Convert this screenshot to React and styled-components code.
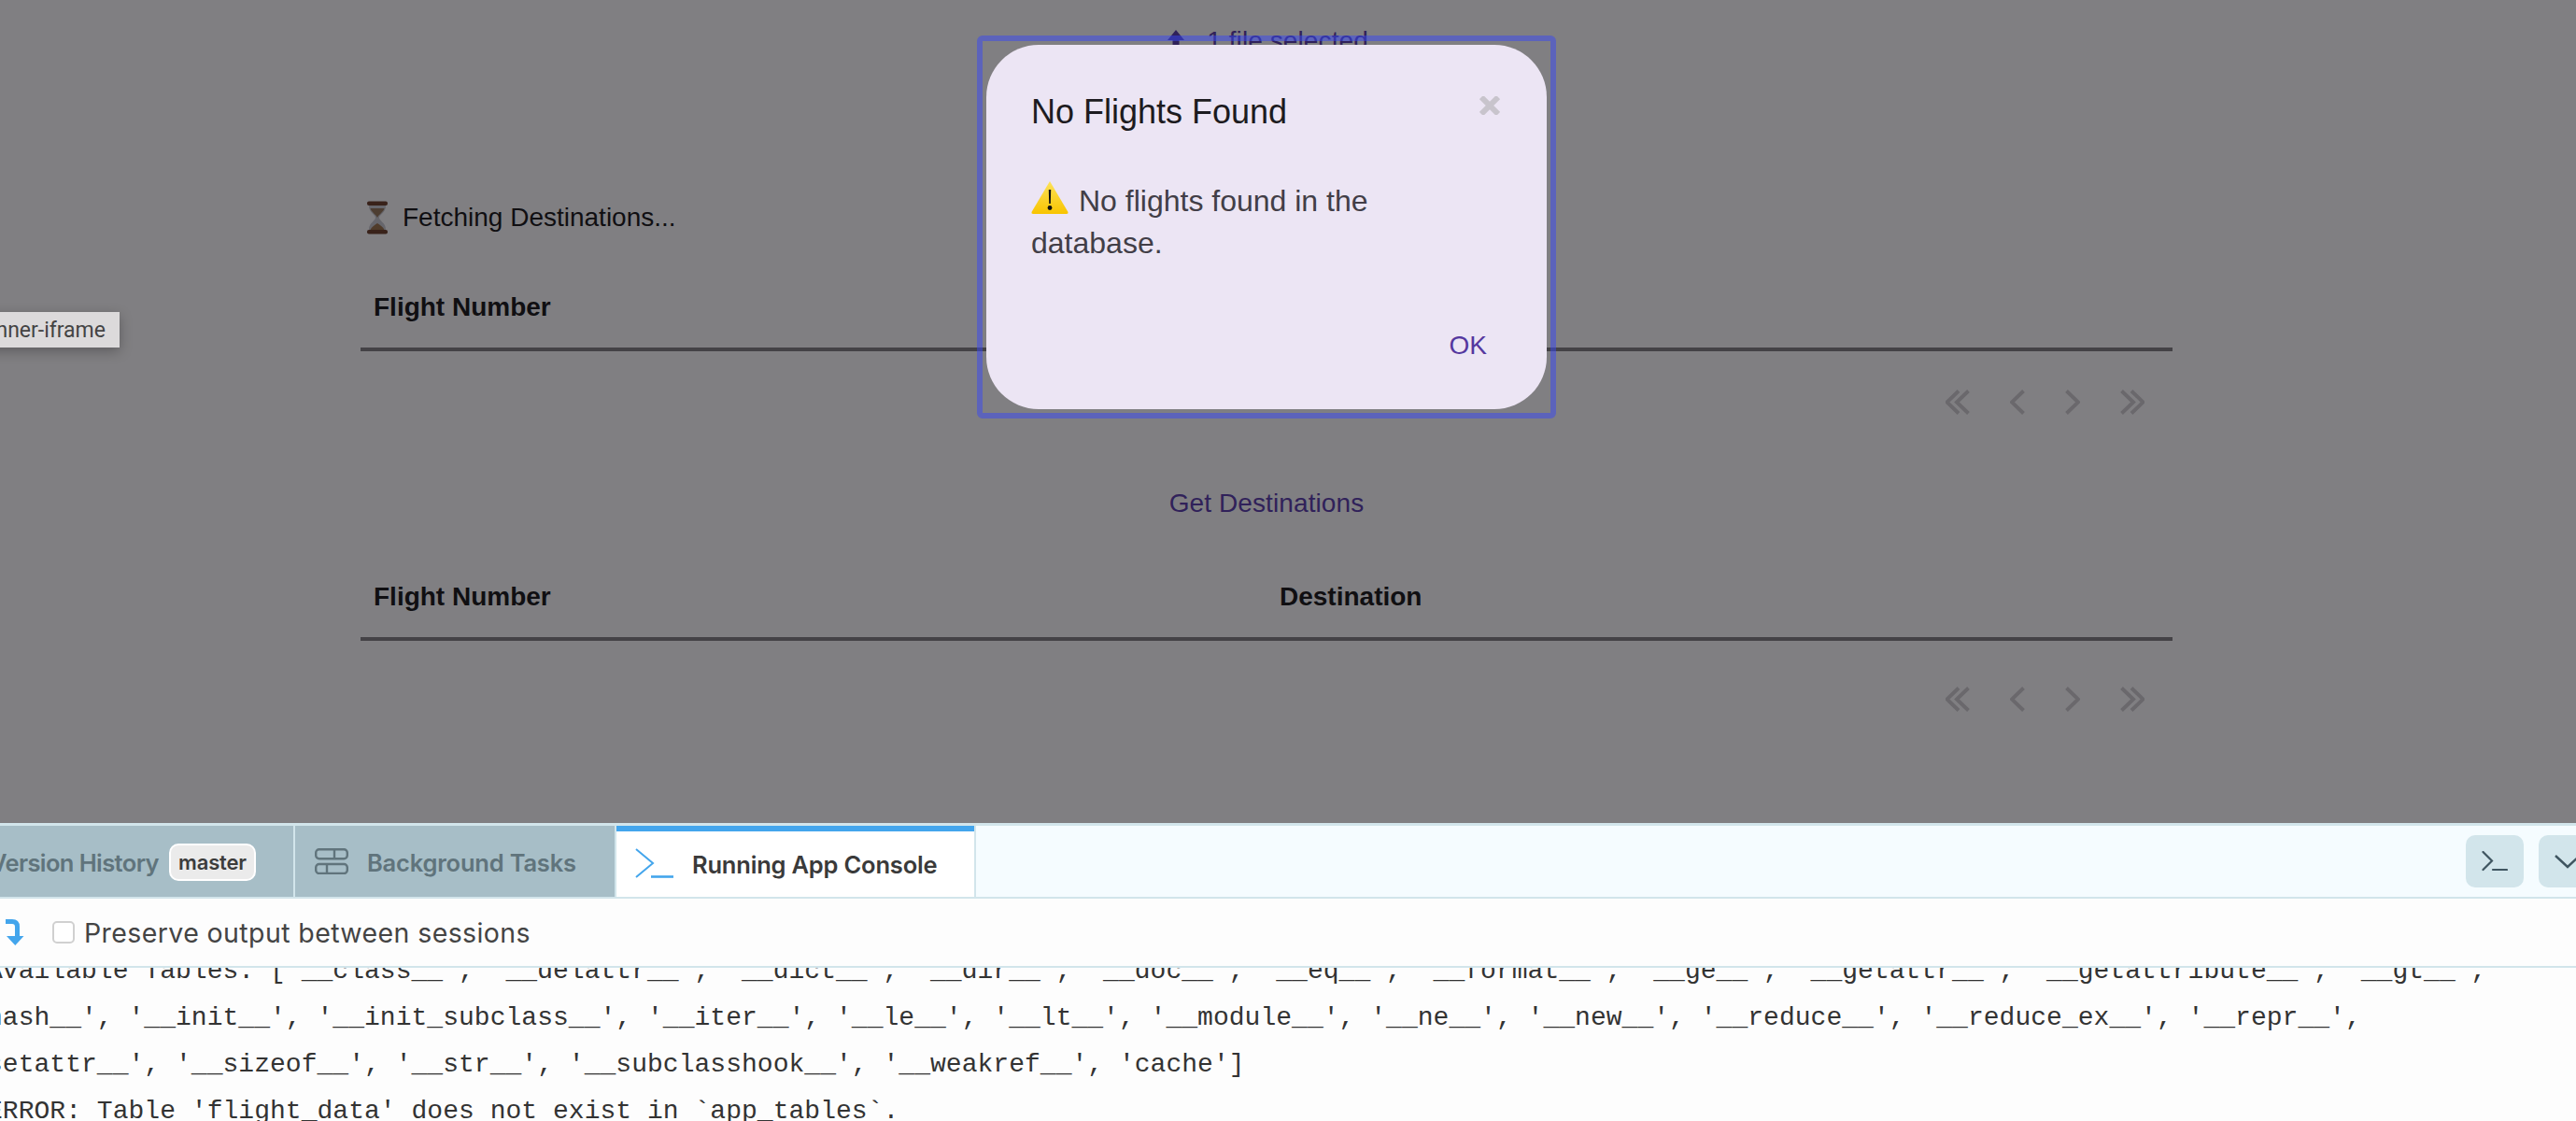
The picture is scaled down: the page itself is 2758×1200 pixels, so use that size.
import React from "react";
import styled, { createGlobalStyle } from "styled-components";

const GlobalStyle = createGlobalStyle`
  html, body {
    margin: 0;
    height: 1200px;
    overflow: hidden;
    background: #fff;
    font-family: "Liberation Sans", Arial, sans-serif;
  }
`;

const Clip = styled.div`
  width: 2758px;
  height: 1200px;
  overflow: hidden;
`;

const Shell = styled.div`
  width: 2804px;
  height: 1200px;
  margin-left: -46px;
  display: flex;
  flex-direction: column;
`;

const Preview = styled.main`
  position: relative;
  height: 881px;
  flex: none;
  overflow: hidden;
  background: #fff;
  display: flex;
  flex-direction: column;
  align-items: center;
  color: #000;
`;

const LinkButton = styled.button`
  display: flex;
  align-items: center;
  gap: 24px;
  height: 32px;
  margin-top: ${({ $top }) => $top}px;
  padding: 0 0 0 ${({ $shift }) => $shift || 0}px;
  border: none;
  background: none;
  font: 28px/32px "Liberation Sans", Arial, sans-serif;
  letter-spacing: 0.1px;
  color: #4a2aa4;

  svg {
    margin-top: 3px;
  }
`;

const Content = styled.section`
  width: 1940px;
  display: flex;
  flex-direction: column;
`;

const Status = styled.div`
  display: flex;
  align-items: center;
  gap: 15px;
  height: 36px;
  margin-top: 155px;
  padding-left: 6px;
  font-size: 28px;
  line-height: 36px;
`;

const TableHead = styled.div`
  display: grid;
  grid-template-columns: 1fr 1fr;
  align-items: center;
  height: 88px;
  margin-top: ${({ $top }) => $top}px;
  border-bottom: 4px solid #767477;
`;

const HeadCell = styled.div`
  padding: 2px 0 0 14px;
  font-size: 28px;
  font-weight: 700;
`;

const Pager = styled.nav`
  display: flex;
  justify-content: flex-end;
  align-items: center;
  gap: 43px;
  height: 27px;
  margin-top: ${({ $top }) => $top}px;
  padding-right: 30px;
  color: #cdcbce;
`;

const Tooltip = styled.div`
  position: absolute;
  top: 334px;
  right: 2630px;
  height: 38px;
  padding: 0 15px;
  display: flex;
  align-items: center;
  white-space: nowrap;
  background: #dcdadb;
  color: #444;
  font: 23px Roboto, sans-serif;
  box-shadow: 0 4px 14px rgba(0, 0, 0, 0.28);
  z-index: 3;
`;

const Scrim = styled.div`
  position: absolute;
  inset: 0;
  display: flex;
  justify-content: center;
  align-items: flex-start;
  background: rgba(29, 27, 32, 0.56);
  z-index: 2;
`;

const FocusRing = styled.div`
  margin-top: 38px;
  padding: 4px;
  border: 6px solid rgba(56, 72, 244, 0.5);
  border-radius: 6px;
`;

const Dialog = styled.div`
  position: relative;
  width: 600px;
  height: 390px;
  box-sizing: border-box;
  padding: 50px 48px 0;
  border-radius: 56px;
  background: #ece5f4;
  display: flex;
  flex-direction: column;
`;

const DialogTitle = styled.h2`
  margin: 0;
  font-size: 36px;
  line-height: 44px;
  font-weight: 400;
  color: #1d1b20;
`;

const CloseButton = styled.button`
  position: absolute;
  top: 55px;
  right: 50px;
  width: 22px;
  height: 20px;
  padding: 0;
  border: none;
  background: none;
  color: #c8c4cc;
`;

const DialogBody = styled.p`
  margin: 51px 0 0;
  width: 440px;
  font-size: 32px;
  line-height: 45px;
  color: #423e47;
`;

const DialogFooter = styled.div`
  margin-top: auto;
  padding: 0 16px 51px 0;
  display: flex;
  justify-content: flex-end;
`;

const OkButton = styled.button`
  padding: 0;
  border: none;
  background: none;
  font: 28px/34px "Liberation Sans", Arial, sans-serif;
  color: #55389f;
`;

const Panel = styled.section`
  flex: 1;
  min-height: 0;
  display: flex;
  flex-direction: column;
  background: #fdfdfd;
  border-top: 3px solid #d2e5eb;
`;

const TabBar = styled.div`
  height: 76px;
  flex: none;
  display: flex;
  background: #f5fcff;
  border-bottom: 2px solid #d2e5eb;
  font-family: Inter, sans-serif;
`;

const Tab = styled.div`
  width: ${({ $width }) => $width}px;
  box-sizing: border-box;
  display: flex;
  align-items: center;
  justify-content: ${({ $end }) => ($end ? "flex-end" : "flex-start")};
  gap: ${({ $gap }) => $gap}px;
  padding: ${({ $pad }) => $pad};
  font-size: 25.5px;
  font-weight: 600;
  letter-spacing: -0.15px;
  white-space: nowrap;
  color: ${({ $active }) => ($active ? "#3a3a3a" : "#60747c")};
  background: ${({ $active }) => ($active ? "#fff" : "#a7bec7")};
  border-right: 2px solid #d2e5eb;
  box-shadow: ${({ $active }) => ($active ? "inset 0 6px 0 #43a5ec" : "none")};
`;

const TabLabel = styled.span`
  padding-top: 2px;
  letter-spacing: ${({ $tight }) => ($tight ? "-0.6px" : "-0.2px")};
`;

const BranchBadge = styled.span`
  height: 40px;
  width: 93px;
  box-sizing: border-box;
  margin-top: 2px;
  display: flex;
  align-items: center;
  justify-content: center;
  border: 2px solid #fff;
  border-radius: 10px;
  background: #ebebeb;
  color: #3c3c3c;
  font-size: 22px;
`;

const BarActions = styled.div`
  margin-left: auto;
  display: flex;
  gap: 16px;
  padding: 10px 0;
  margin-right: -22px;
`;

const IconButton = styled.button`
  width: 62px;
  height: 56px;
  padding: 0;
  border: none;
  border-radius: 10px;
  background: #d2e5eb;
  color: #3f5560;
  display: flex;
  align-items: center;
  justify-content: center;
`;

const Toolbar = styled.div`
  height: 72px;
  flex: none;
  display: flex;
  align-items: center;
  padding-left: 52px;
  border-bottom: 2px solid #d2e5eb;
  font-family: Inter, sans-serif;
`;

const Checkbox = styled.span`
  width: 24px;
  height: 24px;
  box-sizing: border-box;
  margin-left: 30px;
  border: 2px solid #d0d0d0;
  border-radius: 5px;
  background: #fff;
`;

const ToolbarLabel = styled.label`
  margin-left: 10px;
  font-size: 28.5px;
  letter-spacing: 0.4px;
  color: #444;
  white-space: nowrap;
`;

const Console = styled.div`
  flex: 1;
  min-height: 0;
  overflow: hidden;
  padding-left: 32px;
`;

const ConsoleLines = styled.div`
  margin-top: -21px;
`;

const ConsoleLine = styled.div`
  height: 50px;
  font: 28px/50px "Liberation Mono", "DejaVu Sans Mono", monospace;
  letter-spacing: 0.03px;
  color: #333;
  white-space: pre;
`;

const Chevrons = ({ dir, count }) => {
  const w = count === 2 ? 26 : 16;
  const flip = dir === "left" ? `scale(-1 1) translate(-${w} 0)` : undefined;
  return (
    <svg width={w} height="27" viewBox={`0 0 ${w} 27`} fill="none" stroke="currentColor" strokeWidth="4">
      <g transform={flip}>
        <path d="M1.5 1.5 L14 13.5 L1.5 25.5" />
        {count === 2 && <path d="M12 1.5 L24.5 13.5 L12 25.5" />}
      </g>
    </svg>
  );
};

const Pagination = ({ top }) => (
  <Pager $top={top}>
    <Chevrons dir="left" count={2} />
    <Chevrons dir="left" count={1} />
    <Chevrons dir="right" count={1} />
    <Chevrons dir="right" count={2} />
  </Pager>
);

const Hourglass = () => (
  <svg width="24" height="36" viewBox="0 0 24 36">
    <path d="M3 3 H21 V6 C21 12 14 15 14 18 C14 21 21 24 21 30 V33 H3 V30 C3 24 10 21 10 18 C10 15 3 12 3 6 Z" fill="#c4c6cc" />
    <path d="M4.5 8 H19.5 C18.5 12 14 14 12 18 C10 14 5.5 12 4.5 8 Z" fill="#8b6c4a" />
    <path d="M12 24 C15 26 18.5 28 19.5 31 H4.5 C5.5 28 9 26 12 24 Z" fill="#93663a" />
    <rect x="1" y="0.5" width="22" height="4.5" rx="2" fill="#5e2c14" />
    <rect x="1" y="31" width="22" height="4.5" rx="2" fill="#5e2c14" />
  </svg>
);

const WarningIcon = () => (
  <svg width="40" height="36" viewBox="0 0 40 36" style={{ verticalAlign: "-3px", marginRight: 11 }}>
    <defs>
      <linearGradient id="warn" x1="0" y1="0" x2="0" y2="1">
        <stop offset="0" stopColor="#fde25a" />
        <stop offset="1" stopColor="#f8c400" />
      </linearGradient>
    </defs>
    <path d="M20 1 L39.5 34 Q40 36 38 36 H2 Q0 36 0.5 34 Z" fill="url(#warn)" />
    <path d="M18.8 10 H21.2 L20.8 25 H19.2 Z" fill="#111" />
    <circle cx="20" cy="29.5" r="2.4" fill="#111" />
  </svg>
);

const TasksIcon = () => (
  <svg width="36" height="28" viewBox="0 0 36 28" fill="none" stroke="#60747c" strokeWidth="2.4">
    <rect x="1.2" y="1.2" width="33.6" height="10" rx="3.5" />
    <rect x="1.2" y="17" width="33.6" height="10" rx="3.5" />
    <path d="M21 1.2 V11.2 M13 17 V27" />
  </svg>
);

const PromptIcon = () => (
  <svg width="41" height="32" viewBox="0 0 41 32" fill="none" stroke="#43a5ec" strokeWidth="2">
    <path d="M1 1 L19 16 L1 31" />
    <path d="M17 30.5 H41" strokeWidth="2.6" />
  </svg>
);

const SmallPromptIcon = () => (
  <svg width="28" height="22" viewBox="0 0 28 22" fill="none" stroke="currentColor" strokeWidth="2.2" strokeLinecap="round">
    <path d="M1.5 1 L11 10.5 L1.5 20" />
    <path d="M12 20 H27" />
  </svg>
);

const ScrollDownIcon = () => (
  <svg width="20" height="28" viewBox="0 0 20 28" fill="none">
    <path d="M0 2.5 H7 Q12.5 2.5 12.5 8 V20" stroke="#43a5ec" strokeWidth="5" />
    <path d="M1 18 H19.5 L10.3 28 Z" fill="#43a5ec" />
  </svg>
);

const lines = [
  "Available Tables: ['__class__', '__delattr__', '__dict__', '__dir__', '__doc__', '__eq__', '__format__', '__ge__', '__getattr__', '__getattribute__', '__gt__',",
  "hash__', '__init__', '__init_subclass__', '__iter__', '__le__', '__lt__', '__module__', '__ne__', '__new__', '__reduce__', '__reduce_ex__', '__repr__',",
  "setattr__', '__sizeof__', '__str__', '__subclasshook__', '__weakref__', 'cache']",
  "ERROR: Table 'flight_data' does not exist in `app_tables`.",
];

export default function App() {
  return (
    <Clip>
      <GlobalStyle />
      <Shell>
        <Preview>
          <LinkButton $top={28} $shift={3}>
            <svg width="18" height="28" viewBox="0 0 18 28" fill="currentColor">
              <path d="M9 0 L18 11 H12.5 V28 H5.5 V11 H0 Z" />
            </svg>
            1 file selected
          </LinkButton>
          <Content>
            <Status>
              <Hourglass />
              Fetching Destinations...
            </Status>
            <TableHead $top={33}>
              <HeadCell>Flight Number</HeadCell>
              <HeadCell>Destination</HeadCell>
            </TableHead>
            <Pagination top={41} />
          </Content>
          <LinkButton $top={79}>Get Destinations</LinkButton>
          <Content>
            <TableHead $top={39}>
              <HeadCell>Flight Number</HeadCell>
              <HeadCell>Destination</HeadCell>
            </TableHead>
            <Pagination top={49} />
          </Content>
          <Scrim>
            <FocusRing>
              <Dialog>
                <DialogTitle>No Flights Found</DialogTitle>
                <CloseButton aria-label="Close">
                  <svg width="22" height="20" viewBox="0 0 22 20" stroke="currentColor" strokeWidth="6">
                    <path d="M2 1 L20 19 M20 1 L2 19" />
                  </svg>
                </CloseButton>
                <DialogBody>
                  <WarningIcon />
                  No flights found in the database.
                </DialogBody>
                <DialogFooter>
                  <OkButton>OK</OkButton>
                </DialogFooter>
              </Dialog>
            </FocusRing>
          </Scrim>
          <Tooltip>runner-iframe</Tooltip>
        </Preview>
        <Panel>
          <TabBar>
            <Tab $width={362} $end $gap={11} $pad="0 40px 0 0">
              <TabLabel $tight>Version History</TabLabel>
              <BranchBadge>master</BranchBadge>
            </Tab>
            <Tab $width={344} $gap={20} $pad="0 0 0 21px">
              <TasksIcon />
              <TabLabel>Background Tasks</TabLabel>
            </Tab>
            <Tab $width={385} $active $gap={20} $pad="4px 0 0 20px">
              <PromptIcon />
              <TabLabel>Running App Console</TabLabel>
            </Tab>
            <BarActions>
              <IconButton aria-label="Shell">
                <SmallPromptIcon />
              </IconButton>
              <IconButton aria-label="Collapse">
                <svg width="30" height="16" viewBox="0 0 30 16" fill="none" stroke="currentColor" strokeWidth="2.4">
                  <path d="M2 2 L15 14 L28 2" />
                </svg>
              </IconButton>
            </BarActions>
          </TabBar>
          <Toolbar>
            <ScrollDownIcon />
            <Checkbox />
            <ToolbarLabel>Preserve output between sessions</ToolbarLabel>
          </Toolbar>
          <Console>
            <ConsoleLines>
              {lines.map((line) => (
                <ConsoleLine key={line}>{line}</ConsoleLine>
              ))}
            </ConsoleLines>
          </Console>
        </Panel>
      </Shell>
    </Clip>
  );
}
